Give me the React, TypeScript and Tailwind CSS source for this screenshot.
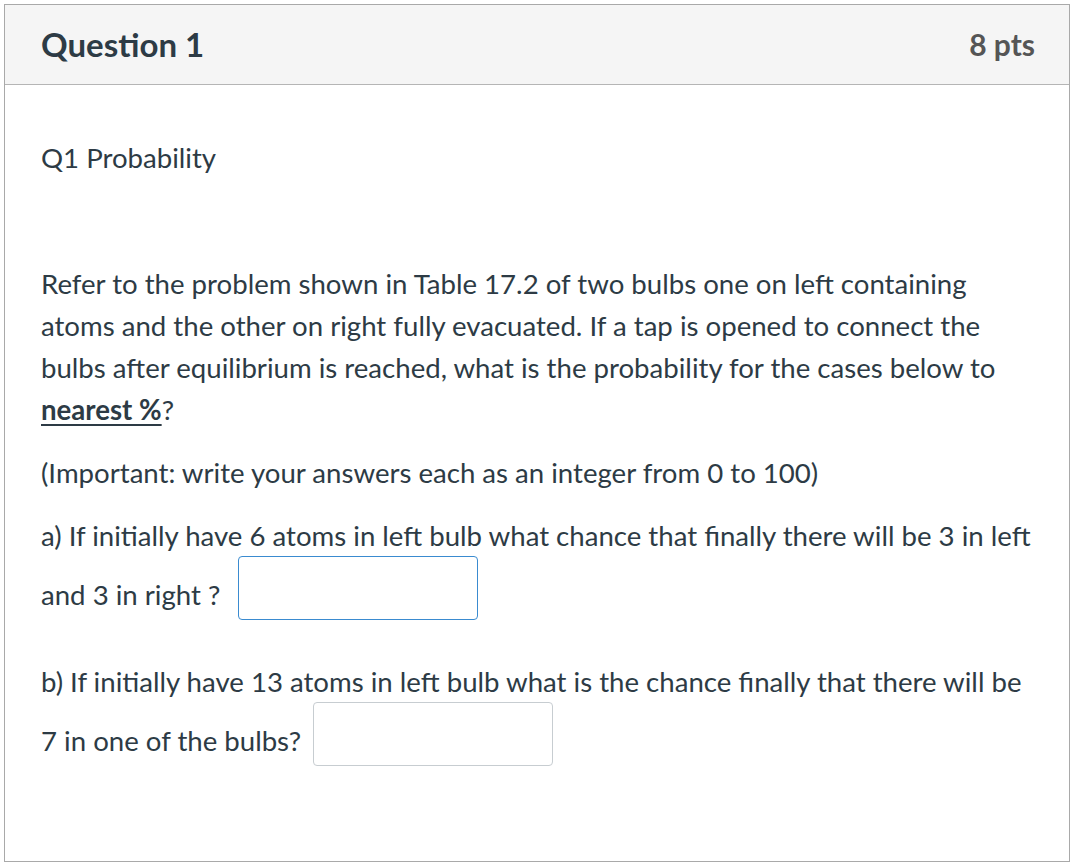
import React from 'react';

const App: React.FC = () => {
  return (
    <div className="min-h-screen bg-white pt-[4px] pl-[4px] font-['Lato','Noto_Sans',sans-serif] text-[#2d3b45]">
      <div className="w-[1066px] h-[858px] border border-[#a9a9a9] flex flex-col">
        {/* Header */}
        <div className="h-[80px] shrink-0 bg-[#f5f5f5] border-b border-[#b5b5b5] flex items-center justify-between pl-[36px] pr-[34px]">
          <h2 className="text-[33px] font-bold">Question 1</h2>
          <span className="text-[30px] font-bold text-[#555555]">8 pts</span>
        </div>

        {/* Body */}
        <div className="pl-[36px] pr-[30px] pt-[52px] text-[27.6px] leading-[42px]">
          <p>Q1 Probability</p>

          <p className="mt-[84px]">
            Refer to the problem shown in Table 17.2 of two bulbs one on left containing
            <br />
            atoms and the other on right fully evacuated. If a tap is opened to connect the
            <br />
            bulbs after equilibrium is reached, what is the probability for the cases below to
            <br />
            <span className="font-bold underline underline-offset-[4px] decoration-2">nearest %</span>?
          </p>

          <p className="mt-[21px]">(Important: write your answers each as an integer from 0 to 100)</p>

          <div className="mt-[21px]">
            <div className="whitespace-nowrap">
              a) If initially have 6 atoms in left bulb what chance that finally there will be 3 in left
            </div>
            <div className="flex items-center mt-[-1px]">
              <span className="mt-[14px]">and 3 in right ?</span>
              <input
                type="text"
                className="ml-[18px] w-[240px] h-[64px] rounded-[4px] border border-[#3a8bd0] bg-white outline-none"
              />
            </div>
          </div>

          <div className="mt-[41px]">
            <div className="whitespace-nowrap">
              b) If initially have 13 atoms in left bulb what is the chance finally that there will be
            </div>
            <div className="flex items-center mt-[-1px]">
              <span className="mt-[14px]">7 in one of the bulbs?</span>
              <input
                type="text"
                className="ml-[12px] w-[240px] h-[64px] rounded-[4px] border border-[#c7cdd1] bg-white outline-none"
              />
            </div>
          </div>
        </div>
      </div>
    </div>
  );
};

export default App;
